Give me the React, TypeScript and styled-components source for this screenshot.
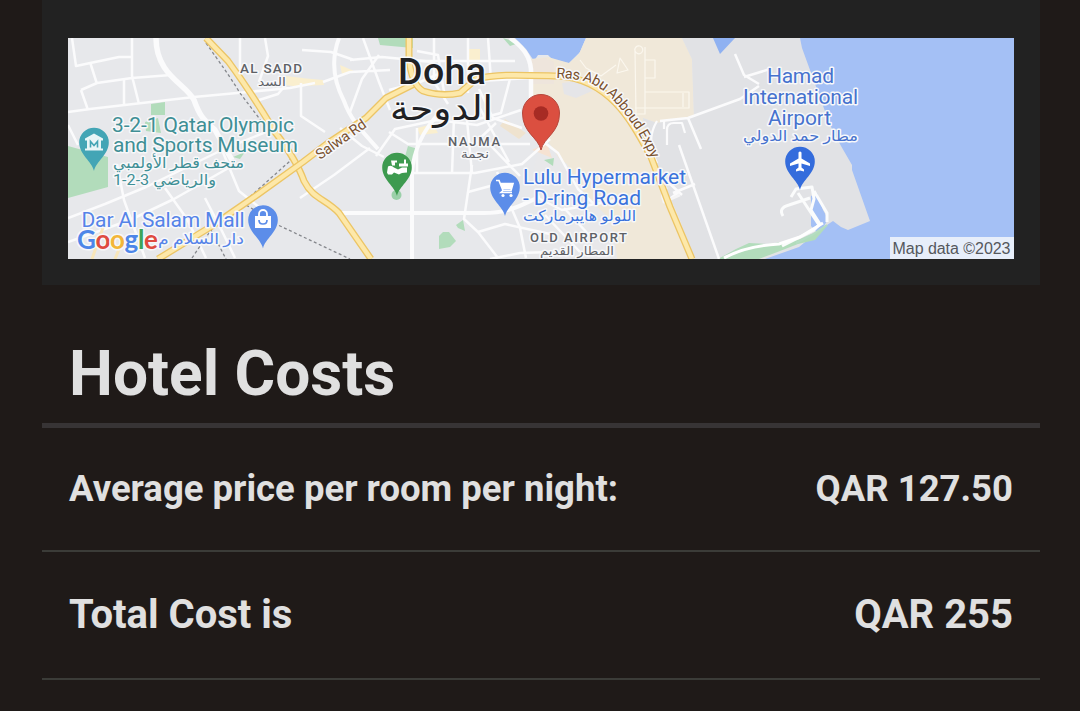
import React from "react";
import styled, { createGlobalStyle } from "styled-components";

const GlobalStyle = createGlobalStyle`
  body {
    margin: 0;
    background: #1f1a18;
    font-family: Roboto, "Liberation Sans", sans-serif;
    color: #e0e0e0;
  }
`;

const Wrapper = styled.div`
  box-sizing: border-box;
  height: 711px;
  padding: 0 40px 0 42px;
  overflow: hidden;
`;

const MapCard = styled.div`
  box-sizing: border-box;
  height: 285px;
  padding: 38px 26px 26px;
  background: #222222;

  svg {
    display: block;
    width: 946px;
    height: 221px;
  }
`;

const Title = styled.h1`
  box-sizing: border-box;
  height: 143px;
  margin: 0;
  padding: 51px 27px 0;
  border-bottom: 5px solid #373435;
  font-size: 62.2px;
  font-weight: 700;
  line-height: 75px;
  white-space: nowrap;
`;

const CostRow = styled.div<{ $height: number; $size: number }>`
  box-sizing: border-box;
  display: flex;
  align-items: center;
  justify-content: space-between;
  height: ${(p) => p.$height}px;
  padding: 0 27px 1px;
  border-bottom: 2px solid #3b3c38;
  font-size: ${(p) => p.$size}px;
  font-weight: 700;
  white-space: nowrap;
`;

const MapText = styled.text<{ $color: string; $size: number; $weight?: number }>`
  font-family: Roboto, "DejaVu Sans", sans-serif;
  font-size: ${(p) => p.$size}px;
  font-weight: ${(p) => p.$weight || 400};
  fill: ${(p) => p.$color};
  stroke: #f7f8fa;
  stroke-width: 3px;
  stroke-linejoin: round;
  paint-order: stroke;
`;

const Road = styled.path<{ $w: number; $color?: string }>`
  fill: none;
  stroke: ${(p) => p.$color || "#fbfbfc"};
  stroke-width: ${(p) => p.$w};
  stroke-linejoin: round;
`;

const Rail = styled.path`
  fill: none;
  stroke: #85878c;
  stroke-width: 1.3;
  stroke-dasharray: 3 2.5;
`;

const teal = "#3f8f95";
const blue = "#3b73dc";
const mall = "#5583e8";
const grey = "#5e6166";

const minorRoads = [
  "M72 38 L76 66 L119 57 L132 57 M90 62 L97 84",
  "M81 90 L97 83 L132 78 L171 75 M81 90 L88 110 M132 38 V76 L139 104",
  "M124 79 V106 M68 112 L90 109 L194 97 L290 88 L315 83",
  "M68 125 L78 145 M68 218 L105 204 L146 187 L222 150 L290 122",
  "M68 242 L130 220 L174 199 L232 166 M117 164 L124 200 L145 258 M165 188 L187 219 L206 258",
  "M205 198 L221 229 L235 258 M222 150 L239 191 L270 216 M240 38 V70 M265 38 L268 56 L259 82",
  "M259 100 L278 94 L284 87 M301 83 V116 L325 132",
  "M302 50 L331 52 L354 60 M323 82 L350 72 L390 70 M350 60 L382 57 L434 62 M363 38 L379 82 L390 110",
  "M379 55 L362 79 L350 112 M389 90 L420 82 L450 69 M417 51 L438 55 L444 92 M434 38 V82 L448 104",
  "M468 38 V93 M488 38 L491 80 M417 61 H515 M479 81 L531 78 M479 89 L493 118 L522 128 M510 79 L501 113 L474 120",
  "M376 156 L395 129 L437 120 L477 125 L521 110 M389 132 L408 144 H530 M417 128 V173 M454 117 L452 174 M467 120 L472 173",
  "M413 173 H475 L522 164 L550 139 M476 101 L509 162 M496 123 L473 145 M490 145 L520 176 M468 192 L494 185",
  "M300 198 L334 175 L370 148 M340 128 L362 146 L384 157 M472 165 L464 219 L478 232 L498 258",
  "M478 232 L505 224 L550 234 M540 199 L562 210 L612 201 M545 215 L580 252 M564 208 L590 236",
  "M497 172 L508 196 M503 198 L511 207 L520 228 L526 258 M490 259 L520 253 L551 252",
  "M532 133 L558 153 L578 189 L594 204 M594 204 L628 198",
  "M735 54 L744 75 L759 84 M744 77 L770 69 M688 118 L740 99 L759 86 M688 118 L701 149 M660 121 L688 118",
  "M679 145 L719 259 M655 170 L682 195 M673 193 L695 184 M665 202 L678 193",
];

const beigeRoads =
  "M635 51 a4 4 0 1 0 5 -5 a4 4 0 0 0 -5 5 L636 114 H645 V47 M620 58 L628 70 L617 73 Z M645 60 H655 V78 H645 M645 92 H689 V108 H635 M683 93 V107 M580 60 L586 68 L601 76 L616 65";

interface PinProps {
  x: number;
  y: number;
  color: string;
  children?: React.ReactNode;
}

// x, y is the centre of the round head
const Pin: React.FC<PinProps> = ({ x, y, color, children }) => (
  <g transform={`translate(${x} ${y})`}>
    <path d="M0 28.5 C-2 19 -14.8 12 -14.8 0 A14.8 14.8 0 0 1 14.8 0 C14.8 12 2 19 0 28.5 Z" fill={color} />
    {children}
  </g>
);

interface LabelProps {
  x: number;
  y: number;
  w: number;
  size: number;
  color: string;
  weight?: number;
  children: string;
}

const Label: React.FC<LabelProps> = ({ x, y, w, size, color, weight, children }) => (
  <MapText
    x={x}
    y={y}
    textLength={w}
    lengthAdjust={/[\u0600-\u06ff]/.test(children) ? "spacingAndGlyphs" : "spacing"}
    $size={size}
    $color={color}
    $weight={weight}
  >
    {children}
  </MapText>
);

const Highway: React.FC<{ d: string; w?: number }> = ({ d, w = 7 }) => (
  <>
    <Road d={d} $w={w} $color="#ecc565" />
    <Road d={d} $w={w - 2.6} $color="#fde8a9" />
  </>
);

const HotelMap = () => (
  <svg viewBox="68 38 946 221">
    <rect x="68" y="38" width="946" height="221" fill="#e7e8eb" />

    {/* coast and districts */}
    <path d="M515 38 H586 L580 52 L569 63 L555 62 L548 55 L538 55 L534 61 L526 49 Z" fill="#9cbbf4" />
    <path d="M586 38 L682 38 L692 59 L694 117 L657 123 L643 118 L649 150 L680 220 L694 259 H617 L600 232 L579 211 L560 160 L541 130 L532 122 L531 59 L548 57 L569 63 L579 54 Z" fill="#f0e8d9" />
    <path d="M531 60 L545 58 L554 62 V84 H531 Z" fill="#eee5dc" />
    <path d="M682 38 H820 L1014 38 V259 H694 L680 220 L649 150 L643 118 L657 123 L694 117 L692 59 Z" fill="#e1e2e5" />
    <path d="M713 38 H735 L720 54 Z" fill="#8fb1f1" />
    <path d="M562 83 L588 79 L592 91 L576 98 L564 94 Z" fill="#e5e5e8" />
    <path d="M540 145 L567 164 L587 197 L606 215 L615 236 L617 259 H531 V180 Z" fill="#e8e8ea" />
    <path d="M800 38 H1014 V259 H765 L799 247 L821 229 L833 221 L841 227 L848 230 L870 221 L852 170 V165 L841 146 L830 125 L810 70 L802 48 Z" fill="#a4c0f5" />
    <path d="M811 196 L817 193 L823 210 L828 219 L819 235 L811 226 Z" fill="#a4c0f5" />

    {/* parks */}
    <g fill="#b2dcbb">
      <path d="M68 146 L108 157 V187 L68 198 Z" />
      <path d="M151 104 L165 102 V115 H151 Z" />
      <path d="M145 122 L158 118 L161 133 L146 131 Z" />
      <path d="M378 38 H413 V48 L380 45 Z" />
      <path d="M503 38 L519 43 L510 46 Z" />
      <path d="M408 146 L418 149 L413 169 L404 160 Z" />
      <path d="M439 236 L443 232 H449 L456 241 L450 247 L439 249 Z" />
      <path d="M456 225 L463 220 L465 231 L458 228 Z" />
      <path d="M544 160 L554 158 L553 166 Z" />
      <path d="M233 157 L245 152 L240 159 Z" />
      <path d="M718 259 L736 249 L749 243 L767 244 L798 240 L816 232 L828 225 L815 240 L798 244 L780 251 L759 259 Z" />
    </g>
    <g fill="#faefcf">
      <path d="M301 78 L323 80 L324 85 L301 86 Z" />
      <path d="M340 65 L354 71 L342 74 Z" />
      <path d="M467 49 H480 V60 H467 Z" />
      <path d="M285 76 L303 78 V87 L284 85 Z" />
      <path d="M417 128 L433 124 L438 133 L420 135 Z" />
    </g>
    <path d="M505 119 L526 133 L519 139 L500 126 Z" fill="#efe3cf" />
    <path d="M532 150 L547 143 L552 158 L535 151 Z" fill="#f6e2d2" />

    {/* roads */}
    {minorRoads.map((d) => (
      <Road key={d} d={d} $w={2.5} />
    ))}
    <Road d={beigeRoads} $w={1.2} $color="#fbf7ee" />
    <Road d="M156 38 C156 75 186 84 194 100 C200 117 204 120 215 130 L232 160" $w={5.5} />
    <Road d="M339 38 C330 62 334 82 344 101 C351 121 364 133 378 149" $w={4} />
    <Road d="M412 259 V173 Q414 140 440 112" $w={4} />
    <Road d="M338 213 H480 C512 214 525 202 540 197" $w={4} />
    <Road d="M510 38 C528 50 532 63 531 77 V132" $w={4.5} />
    <Road d="M657 121 C648 136 650 150 657 163 M664 121 V129 M667 145 V130 Q667 123 674 123 H682 L685 133" $w={2.2} />
    <Road d="M667 187 Q660 192 664 202 L680 195" $w={3} $color="#f5f5f6" />
    <path d="M791 197 L796 189 L812 187 L814 199 L811 210 L820 224 M798 193 L819 225 L814 230 L782 246 M814 191 L827 213 V222 M783 216 Q778 208 789 205 L810 198" fill="none" stroke="#fbfcfc" strokeWidth="3" strokeLinejoin="round" />
    <path d="M724 258 Q746 246 779 244 L800 237 L823 223" fill="none" stroke="#fff" strokeWidth="3" />
    <path d="M796 243 L812 235 L827 225" fill="none" stroke="#b5ddc3" strokeWidth="2" />

    <Rail d="M206 43 C220 63 227 72 240 93 L262 122 M290 151 V161 L243 203 L278 225 L350 259 M192 258 L211 230 L226 259" />
    <Highway d="M206 38 L228 61 Q251 92 275 132 C288 149 298 164 304 181 C313 199 326 199 339 213 L371 259" />
    <Highway d="M158 259 L212 226 L257 195 L303 162 L328 143 L366 118 L386 98 L414 84" />
    <Highway d="M409 38 V57 Q411 84 423 91 Q441 97 460 93 L476 79 C496 74 517 75 558 76" />
    <Highway d="M558 76 C611 79 633 124 651 157 L670 207 L692 259" />
    <path d="M92 259 L105 222 L98 215 M115 259 L120 247" fill="none" stroke="#f8e6b9" strokeWidth="3" />

    {/* pins */}
    <Pin x={94} y={142.5} color="#43a5b5">
      <path d="M0 -9 L9 -4 V-2 H7 V6 H9 V8 H-9 V6 H-7 V-2 H-9 V-4 Z" fill="#e9f6f7" />
      <path d="M-3.5 5 V-1 L0 3 L3.5 -1 V5" fill="none" stroke="#43a5b5" strokeWidth="1.6" />
    </Pin>
    <circle cx="396.5" cy="195" r="5" fill="#9bd0a9" />
    <Pin x={397} y={167.5} color="#3d9a4f">
      <path d="M-10 5 L-9 -1 Q-6 -3 -3 0 L1 2 L5 0 H10 V5 Q4 5 2 7 L-3 5 L-5 7 H-9 Z" fill="#fff" />
      <path d="M-6 -7 H0 V-5 H-2 V-2 H-5 Z M7 -8 H9 V-4 H11 V-1 H2 V-4 H7 Z" fill="#fff" />
    </Pin>
    <Pin x={505} y={187.5} color="#5c8de9">
      <path d="M-9 -7 H-6 L-2 3 H6 L8 -4 H-5 M-2 3 L-4 5 H7" fill="none" stroke="#fff" strokeWidth="1.7" />
      <path d="M-5 -4 H8 L6 2 H-2 Z" fill="#fff" />
      <circle cx="-2" cy="8" r="1.6" fill="#fff" />
      <circle cx="6" cy="8" r="1.6" fill="#fff" />
    </Pin>
    <Pin x={263} y={220} color="#5c8de9">
      <path d="M-8 -4 H8 V8 H-8 Z" fill="#fff" />
      <path d="M-4 -4 V-6 A4 4 0 0 1 4 -6 V-4" fill="none" stroke="#fff" strokeWidth="1.8" />
      <path d="M-4 0 Q-4 4 0 4 Q4 4 4 0" fill="none" stroke="#5c8de9" strokeWidth="1.7" />
    </Pin>
    <Pin x={800} y={161.5} color="#346cdc">
      <path d="M-1.5 -9 Q0 -11 1.5 -9 V-3 L10 2 V4.5 L1.5 2 V6 L4 8 V10 L0 9 L-4 10 V8 L-1.5 6 V2 L-10 4.5 V2 L-1.5 -3 Z" fill="#fff" />
    </Pin>

    {/* labels */}
    <Label x={240} y={73} w={62} size={13.5} weight={500} color={grey}>AL SADD</Label>
    <Label x={258} y={86} w={28} size={12} color={grey}>السد</Label>
    <Label x={112} y={131.5} w={182} size={21} color={teal}>3-2-1 Qatar Olympic</Label>
    <Label x={113} y={152} w={185} size={21} color={teal}>and Sports Museum</Label>
    <Label x={113} y={168} w={131} size={15} color={teal}>متحف قطر الأولمبي</Label>
    <Label x={113} y={185} w={103} size={15} color={teal}>والرياضي 3-2-1</Label>
    <Label x={81.5} y={226.5} w={163} size={21} color={mall}>Dar Al Salam Mall</Label>
    <Label x={158} y={244} w={86} size={15} color={mall}>دار السلام م</Label>
    <Label x={448} y={146} w={52} size={13} weight={500} color={grey}>NAJMA</Label>
    <Label x={461} y={158} w={28} size={12} color={grey}>نجمة</Label>
    <Label x={523} y={184} w={163} size={21} color={blue}>Lulu Hypermarket</Label>
    <Label x={523} y={205} w={118} size={21} color={blue}>- D-ring Road</Label>
    <Label x={523} y={221} w={113} size={15} color={blue}>اللولو هايبرماركت</Label>
    <Label x={530} y={242} w={97} size={13} weight={500} color={grey}>OLD AIRPORT</Label>
    <Label x={540} y={255} w={74} size={12} color={grey}>المطار القديم</Label>
    <Label x={767} y={83} w={67} size={21} color="#4672ce">Hamad</Label>
    <Label x={743} y={104} w={115} size={21} color="#4672ce">International</Label>
    <Label x={768} y={124.5} w={63} size={21} color="#4672ce">Airport</Label>
    <Label x={743} y={141} w={115} size={15} color="#4672ce">مطار حمد الدولي</Label>
    <Label x={398} y={84} w={88} size={37.5} weight={500} color="#202124">Doha</Label>
    <Label x={390} y={120} w={103} size={34} color="#202124">الدوحة</Label>

    <path id="salwa" d="M320 160 L374 122" fill="none" />
    <path id="rasabu" d="M556 78 C588 79 598 84 614 101 C634 123 645 143 655 168" fill="none" />
    <MapText $size={14.5} $color="#7a512d">
      <textPath href="#salwa" textLength="58">Salwa Rd</textPath>
    </MapText>
    <MapText $size={14.5} $color="#7a512d">
      <textPath href="#rasabu" textLength="134">Ras Abu Abboud Expy</textPath>
    </MapText>

    {/* hotel marker */}
    <path d="M541 150 C538 137 522.5 133 522.5 113 A18.5 18.5 0 0 1 559.5 113 C559.5 133 544 137 541 150 Z" fill="#db4f40" stroke="#b7473c" />
    <circle cx="541" cy="113.5" r="7.3" fill="#a72b24" />

    {/* attribution */}
    <MapText x="77" y="249" textLength="81" $size={26} $color="#4d86e8" style={{ fontFamily: "Lato, sans-serif", fontWeight: 700 }}>
      G<tspan fill="#df4b40">o</tspan><tspan fill="#f3b63a">o</tspan>g<tspan fill="#3fa557">l</tspan><tspan fill="#df4b40">e</tspan>
    </MapText>
    <rect x="890" y="237" width="124" height="22" fill="#e7eefa" />
    <text x="892.5" y="253.5" textLength="118" fontFamily="Liberation Sans, sans-serif" fontSize="16" fill="#55585d">
      Map data ©2023
    </text>
  </svg>
);

const App: React.FC = () => {
  return (
    <>
      <GlobalStyle />
      <Wrapper>
        <MapCard>
          <HotelMap />
        </MapCard>
        <Title>Hotel Costs</Title>
        <CostRow $height={124} $size={36.5}>
          <span>Average price per room per night:</span>
          <span>QAR 127.50</span>
        </CostRow>
        <CostRow $height={128} $size={40}>
          <span>Total Cost is</span>
          <span>QAR 255</span>
        </CostRow>
      </Wrapper>
    </>
  );
};

export default App;
